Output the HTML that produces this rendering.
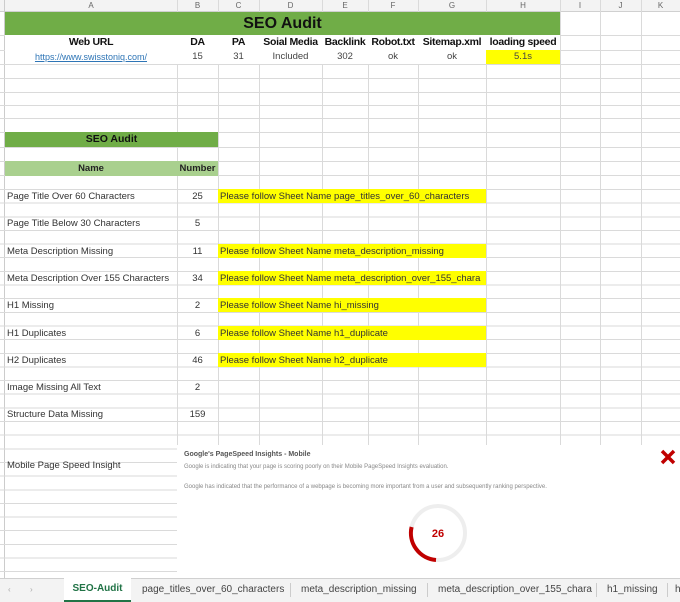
<!DOCTYPE html>
<html><head><meta charset="utf-8"><style>
*{margin:0;padding:0;box-sizing:border-box}
body{width:680px;height:602px;overflow:hidden;background:#fff;font-family:"Liberation Sans",sans-serif;position:relative;color:#333}
.a{position:absolute}
.v{position:absolute;width:1px;background:#dadada;top:0;height:578px}
.h{position:absolute;height:1px;background:#dadada;left:0;width:680px}
.ch{position:absolute;top:0;height:12px;font-size:8px;color:#666;text-align:center;line-height:12px}
.t{position:absolute;font-size:9.5px;line-height:14px;white-space:nowrap}
.y{position:absolute;left:218px;width:268px;height:14px;background:#ffff00;font-size:9.5px;line-height:15px;padding-left:2px;color:#333;white-space:nowrap;overflow:hidden}
.n{position:absolute;left:177px;width:41px;text-align:center;font-size:9.5px;line-height:15px}
.hd{position:absolute;top:35px;height:15px;font-weight:bold;font-size:10.5px;text-align:center;line-height:15px;color:#111;white-space:nowrap;letter-spacing:-0.3px}
.r2{position:absolute;top:50px;height:14px;font-size:9.5px;text-align:center;line-height:14px;color:#444}
</style></head><body>
<div class="a" style="left:0;top:0;width:680px;height:12px;background:#f3f3f3;border-bottom:1px solid #d0d0d0"></div>
<div class="ch" style="left:5px;width:172px">A</div>
<div class="ch" style="left:177px;width:41px">B</div>
<div class="ch" style="left:218px;width:41px">C</div>
<div class="ch" style="left:259px;width:63px">D</div>
<div class="ch" style="left:322px;width:46px">E</div>
<div class="ch" style="left:368px;width:50px">F</div>
<div class="ch" style="left:418px;width:68px">G</div>
<div class="ch" style="left:486px;width:74px">H</div>
<div class="ch" style="left:560px;width:40px">I</div>
<div class="ch" style="left:600px;width:41px">J</div>
<div class="ch" style="left:641px;width:39px">K</div>
<div class="v" style="left:4px;background:#ccc"></div>
<div class="v" style="left:177px"></div><div class="v" style="left:218px"></div><div class="v" style="left:259px"></div><div class="v" style="left:322px"></div><div class="v" style="left:368px"></div><div class="v" style="left:418px"></div><div class="v" style="left:486px"></div><div class="v" style="left:560px"></div><div class="v" style="left:600px"></div><div class="v" style="left:641px"></div>
<div class="h" style="top:35px"></div><div class="h" style="top:50px"></div><div class="h" style="top:64px"></div><div class="h" style="top:78px"></div><div class="h" style="top:92px"></div><div class="h" style="top:105px"></div><div class="h" style="top:118px"></div><div class="h" style="top:132px"></div><div class="h" style="top:147px"></div><div class="h" style="top:161px"></div><div class="h" style="top:175px"></div>
<div class="a" style="left:0;top:189px;width:680px;height:389px;background:repeating-linear-gradient(to bottom,#dadada 0,#dadada 1px,transparent 1px,transparent 13.65px)"></div>
<div class="a" style="left:5px;top:12px;width:555px;height:23px;background:#70ad47;text-align:center;font-weight:bold;font-size:16px;line-height:23px;color:#111">SEO Audit</div>
<div class="a" style="left:5px;top:35px;width:555px;height:29px;background:#fff"></div>
<div class="hd" style="left:5px;width:172px">Web URL</div>
<div class="hd" style="left:177px;width:41px">DA</div>
<div class="hd" style="left:218px;width:41px">PA</div>
<div class="hd" style="left:259px;width:63px">Soial Media</div>
<div class="hd" style="left:322px;width:46px">Backlink</div>
<div class="hd" style="left:368px;width:50px">Robot.txt</div>
<div class="hd" style="left:418px;width:68px">Sitemap.xml</div>
<div class="hd" style="left:486px;width:74px">loading speed</div>
<div class="r2" style="left:5px;width:172px;color:#2e75b6;text-decoration:underline;font-size:9px">https://www.swisstoniq.com/</div>
<div class="r2" style="left:177px;width:41px">15</div>
<div class="r2" style="left:218px;width:41px">31</div>
<div class="r2" style="left:259px;width:63px">Included</div>
<div class="r2" style="left:322px;width:46px">302</div>
<div class="r2" style="left:368px;width:50px">ok</div>
<div class="r2" style="left:418px;width:68px">ok</div>
<div class="r2" style="left:486px;width:74px;background:#ffff00">5.1s</div>
<div class="a" style="left:5px;top:132px;width:213px;height:15px;background:#70ad47;text-align:center;font-weight:bold;font-size:10.5px;line-height:15px;color:#111">SEO Audit</div>
<div class="a" style="left:5px;top:161px;width:213px;height:15px;background:#a9d08e;font-weight:bold;font-size:9.5px;line-height:15px;color:#222"><span style="position:absolute;left:0;width:172px;text-align:center">Name</span><span style="position:absolute;left:172px;width:41px;text-align:center">Number</span></div>
<div class="t" style="left:7px;top:190px">Page Title Over 60 Characters</div><div class="n" style="top:189px">25</div><div class="y" style="top:189px">Please follow Sheet Name page_titles_over_60_characters</div>
<div class="t" style="left:7px;top:217px">Page Title Below 30 Characters</div><div class="n" style="top:216px">5</div>
<div class="t" style="left:7px;top:245px">Meta Description Missing</div><div class="n" style="top:244px">11</div><div class="y" style="top:244px">Please follow Sheet Name meta_description_missing</div>
<div class="t" style="left:7px;top:272px">Meta Description Over 155 Characters</div><div class="n" style="top:271px">34</div><div class="y" style="top:271px">Please follow Sheet Name meta_description_over_155_chara</div>
<div class="t" style="left:7px;top:299px">H1 Missing</div><div class="n" style="top:298px">2</div><div class="y" style="top:298px">Please follow Sheet Name hi_missing</div>
<div class="t" style="left:7px;top:327px">H1 Duplicates</div><div class="n" style="top:326px">6</div><div class="y" style="top:326px">Please follow Sheet Name h1_duplicate</div>
<div class="t" style="left:7px;top:354px">H2 Duplicates</div><div class="n" style="top:353px">46</div><div class="y" style="top:353px">Please follow Sheet Name h2_duplicate</div>
<div class="t" style="left:7px;top:381px">Image Missing All Text</div><div class="n" style="top:380px">2</div>
<div class="t" style="left:7px;top:408px">Structure Data Missing</div><div class="n" style="top:407px">159</div>
<div class="t" style="left:7px;top:459px">Mobile Page Speed Insight</div>
<div class="a" style="left:177px;top:445px;width:503px;height:133px;background:#fff">
<div class="a" style="left:7px;top:6px;font-size:7px;font-weight:bold;color:#555">Google's PageSpeed Insights - Mobile</div>
<div class="a" style="left:7px;top:19px;font-size:6px;color:#888;white-space:nowrap">Google is indicating that your page is scoring poorly on their Mobile PageSpeed Insights evaluation.</div>
<div class="a" style="left:7px;top:39px;font-size:6px;color:#888;white-space:nowrap">Google has indicated that the performance of a webpage is becoming more important from a user and subsequently ranking perspective.</div>
<svg class="a" style="left:483px;top:4px" width="16" height="16" viewBox="0 0 16 16"><path d="M2 2L14 14M14 2L2 14" stroke="#c00000" stroke-width="3.5"/></svg>
<svg class="a" style="left:230px;top:57px" width="62" height="62" viewBox="0 0 62 62"><circle cx="31" cy="31" r="27" fill="none" stroke="#eee" stroke-width="4"/><path d="M4.6 25 A27 27 0 0 0 29 58" fill="none" stroke="#c00000" stroke-width="4"/><text x="31" y="35" text-anchor="middle" font-size="11" font-weight="bold" fill="#c00000" font-family="Liberation Sans">26</text></svg>
</div>
<div class="a" style="left:0;top:578px;width:680px;height:24px;background:#f3f3f3;border-top:1px solid #d0d0d0;font-size:10px;color:#444;line-height:22px">
<span class="a" style="left:8px;color:#aaa;font-size:8px">‹</span><span class="a" style="left:30px;color:#aaa;font-size:8px">›</span>
<span class="a" style="left:64px;width:67px;top:-1px;height:24px;background:#fff;border-bottom:2px solid #217346;text-align:center;font-weight:bold;color:#217346">SEO-Audit</span>
<span class="a" style="left:142px">page_titles_over_60_characters</span>
<span class="a" style="left:290px;width:1px;height:14px;top:4px;background:#ccc"></span>
<span class="a" style="left:301px">meta_description_missing</span>
<span class="a" style="left:427px;width:1px;height:14px;top:4px;background:#ccc"></span>
<span class="a" style="left:438px">meta_description_over_155_chara</span>
<span class="a" style="left:596px;width:1px;height:14px;top:4px;background:#ccc"></span>
<span class="a" style="left:607px">h1_missing</span>
<span class="a" style="left:667px;width:1px;height:14px;top:4px;background:#ccc"></span>
<span class="a" style="left:675px">h</span>
</div>
</body></html>
